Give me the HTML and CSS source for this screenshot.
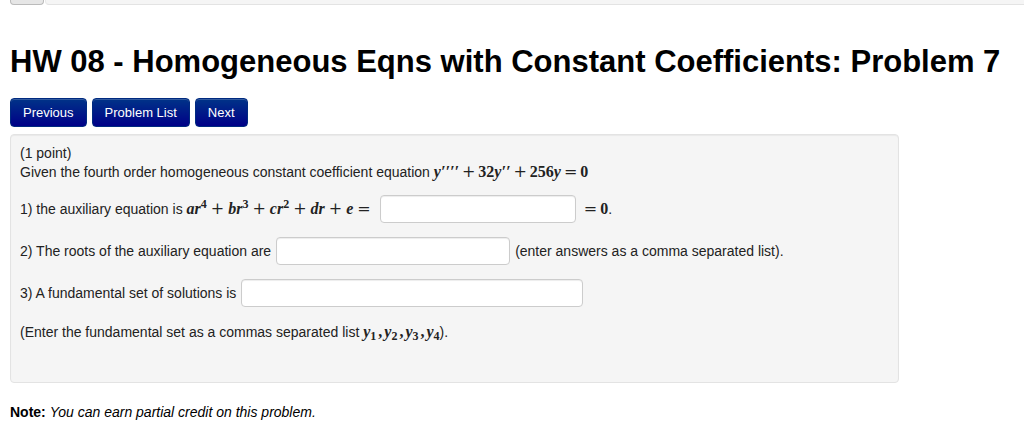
FILE: index.html
```html
<!DOCTYPE html>
<html lang="en">
<head>
  <meta charset="UTF-8">
  <meta name="viewport" content="width=device-width, initial-scale=1.0">
  <title>HW 08 - Problem 7</title>
  <link rel="stylesheet" href="styles.css">
</head>
<body>

  <div class="topbar">
    <button type="button" class="toggle" aria-label="Toggle menu"></button>
    <div class="breadcrumb"></div>
  </div>

  <h1>HW 08 - Homogeneous Eqns with Constant Coefficients: Problem 7</h1>

  <nav class="buttons">
    <a href="#" class="btn">Previous</a>
    <a href="#" class="btn">Problem List</a>
    <a href="#" class="btn">Next</a>
  </nav>

  <form class="problem">
    <div class="intro">
      <div>(1 point)</div>
      <div>Given the fourth order homogeneous constant coefficient equation <span class="math"><i>y</i><span class="prime">′′′′</span><span class="op">+</span>32<i>y</i><span class="prime">′′</span><span class="op">+</span>256<i>y</i><span class="op">=</span>0</span></div>
    </div>

    <div class="row">
      <label for="auxiliary">1) the auxiliary equation is <span class="math"><i>ar</i><sup>4</sup><span class="op">+</span><i>br</i><sup>3</sup><span class="op">+</span><i>cr</i><sup>2</sup><span class="op">+</span><i>dr</i><span class="op">+</span><i>e</i><span class="op">=</span></span></label>
      <input type="text" id="auxiliary" class="short">
      <span><span class="math"><span class="op">=</span>0</span>.</span>
    </div>

    <div class="row">
      <label for="roots">2) The roots of the auxiliary equation are</label>
      <input type="text" id="roots" class="medium">
      <span>(enter answers as a comma separated list).</span>
    </div>

    <div class="row">
      <label for="solutions">3) A fundamental set of solutions is</label>
      <input type="text" id="solutions" class="long">
    </div>

    <div class="hint">(Enter the fundamental set as a commas separated list <span class="math"><i>y</i><sub>1</sub><span class="comma">,</span><i>y</i><sub>2</sub><span class="comma">,</span><i>y</i><sub>3</sub><span class="comma">,</span><i>y</i><sub>4</sub></span>).</div>
  </form>

  <p class="note"><b>Note:</b> <i>You can earn partial credit on this problem.</i></p>

</body>
</html>
```
FILE: styles.css
```css
body {
  font-family: "Liberation Sans", Arial, sans-serif;
  font-size: 14px;
  line-height: 19px;
  color: #222;
  background-color: #fff;
  margin: 0;
  padding-left: 10px;
}

.topbar {
  display: flex;
  gap: 1px;
  height: 5px;
}

.toggle {
  box-sizing: border-box;
  width: 34px;
  padding: 0;
  background-color: #e6e6e6;
  border: 1px solid #bbb;
  border-top: none;
  border-radius: 0 0 4px 4px;
}

.breadcrumb {
  flex: 1;
  background-color: #f5f5f5;
  border-left: 1px solid #e8e8e8;
  border-bottom: 1px solid #e3e3e3;
  border-bottom-left-radius: 4px;
}

h1 {
  margin: 37px 0 16px;
  font-size: 31px;
  line-height: 40px;
  color: #000;
  white-space: nowrap;
}

.buttons {
  display: flex;
  gap: 5px;
}

.btn {
  padding: 5px 12px 4px;
  font-size: 13px;
  line-height: 18px;
  color: #fff;
  text-decoration: none;
  background-image: linear-gradient(#003388, #000088);
  border: 1px solid #002a80;
  border-radius: 4px;
  box-shadow: inset 0 1px 0 rgba(255, 255, 255, 0.2);
}

.problem {
  box-sizing: border-box;
  max-width: 889px;
  margin-top: 7px;
  padding: 9px 9px 40px;
  background-color: #f5f5f5;
  border: 1px solid #e3e3e3;
  border-radius: 4px;
  box-shadow: inset 0 1px 1px rgba(0, 0, 0, 0.05);
}

.intro {
  margin-bottom: 13px;
}

.row {
  display: flex;
  align-items: center;
  gap: 5px;
  margin-bottom: 14px;
}

input {
  box-sizing: border-box;
  height: 28px;
  padding: 4px 6px;
  font: inherit;
  background-color: #fff;
  border: 1px solid #ccc;
  border-radius: 4px;
  box-shadow: inset 0 1px 1px rgba(0, 0, 0, 0.075);
}

.short {
  width: 196px;
}

.medium {
  width: 234px;
}

.long {
  width: 342px;
}

.hint {
  margin-top: 16px;
}

.math {
  font-family: "Liberation Serif", serif;
  font-size: 16px;
  font-weight: bold;
  line-height: 16px;
  white-space: nowrap;
}

.math sup,
.math sub {
  font-size: 12px;
  line-height: 0;
}

.math sub {
  vertical-align: -3px;
}

.prime {
  font-style: italic;
}

.op {
  margin: 0 3px;
  font-family: "DejaVu Serif", serif;
  font-weight: normal;
}

label .op {
  margin: 0 4px;
}

.comma {
  margin: 0 2px;
}

.note {
  margin: 20px 0 0;
  color: #000;
}
```
